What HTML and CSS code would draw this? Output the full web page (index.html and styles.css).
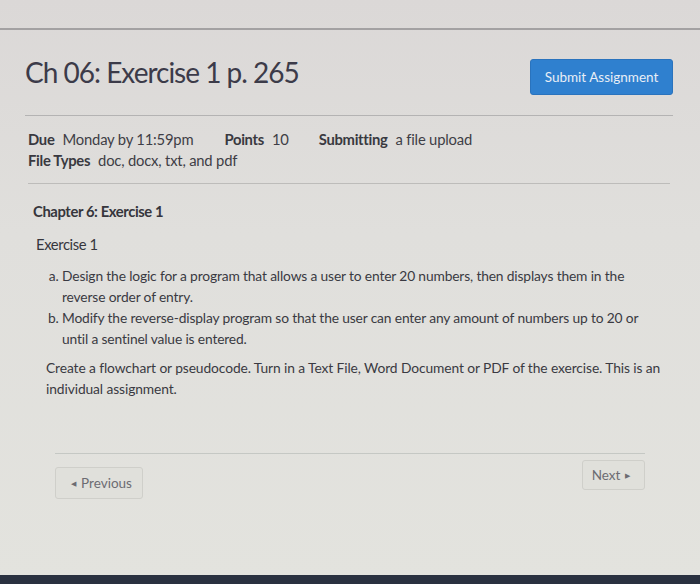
FILE: index.html
```html
<!DOCTYPE html>
<html>
<head>
<meta charset="utf-8">
<link rel="stylesheet" href="styles.css">
</head>
<body>
<div class="topbar"></div>
<main class="page">
  <header class="header">
    <h1 class="title">Ch 06: Exercise 1 p. 265</h1>
    <button class="submit">Submit Assignment</button>
  </header>
  <section class="details">
    <div class="row">
      <span class="lbl">Due</span><span class="val w1">Monday by 11:59pm</span>
      <span class="lbl">Points</span><span class="val w2">10</span>
      <span class="lbl">Submitting</span><span class="val">a file upload</span>
    </div>
    <div class="row">
      <span class="lbl">File Types</span><span class="val">doc, docx, txt, and pdf</span>
    </div>
  </section>
  <section class="content">
    <h2 class="h-chapter">Chapter 6: Exercise 1</h2>
    <h3 class="h-ex">Exercise 1</h3>
    <ol class="tasks">
      <li>Design the logic for a program that allows a user to enter 20 numbers, then displays them in the reverse order of entry.</li>
      <li>Modify the reverse-display program so that the user can enter any amount of numbers up to 20 or until a sentinel value is entered.</li>
    </ol>
    <p class="para">Create a flowchart or pseudocode. Turn in a Text File, Word Document or PDF of the exercise. This is an individual assignment.</p>
  </section>
  <nav class="pager">
    <a class="navbtn prev"><span class="tri">&#9664;</span>Previous</a>
    <a class="navbtn next">Next<span class="tri">&#9654;</span></a>
  </nav>
</main>
<div class="bottombar"></div>
</body>
</html>
```
FILE: styles.css
```css
html, body {
  margin: 0;
  padding: 0;
}
body {
  width: 700px;
  height: 584px;
  overflow: hidden;
  background: linear-gradient(180deg, #dbd8d7 0%, #e0dfdc 40%, #e3e3de 100%);
  font-family: Lato, "Open Sans", sans-serif;
  color: #3a3a42;
  display: flex;
  flex-direction: column;
}
.topbar {
  height: 28px;
  border-bottom: 2px solid #a3a1a2;
  flex: none;
}
.page {
  flex: 1;
  padding: 0 27px 0 25px;
}
.header {
  display: flex;
  justify-content: space-between;
  align-items: center;
  padding: 29px 0 20px;
  border-bottom: 1px solid #b4b3b3;
}
.title {
  margin: 0;
  font-size: 28px;
  font-weight: 400;
  color: #3c3b49;
  letter-spacing: -1px;
  line-height: 36px;
  position: relative;
  top: -5px;
}
.submit {
  width: 143px;
  height: 36px;
  margin-right: 0;
  background: #2f80cf;
  border: 1px solid #2a73bd;
  border-radius: 3px;
  color: #e8eef6;
  font-family: Lato, sans-serif;
  font-size: 13.5px;
  padding: 0;
}
.details {
  margin: 0 3px 0 3px;
  padding: 13px 0 12px;
  border-bottom: 1px solid #bdbcba;
  font-size: 14.8px;
  line-height: 21px;
}
.row {
  display: flex;
}
.lbl {
  font-weight: 700;
  color: #393940;
  margin-right: 8px;
  letter-spacing: -0.3px;
}
.val {
  color: #3e3e46;
  letter-spacing: -0.2px;
}
.w1 { margin-right: 31px; }
.w2 { margin-right: 30px; }
.content {
  padding: 16px 0 0 8px;
}
.h-chapter {
  margin: 0;
  font-size: 14.8px;
  font-weight: 700;
  color: #36363c;
  line-height: 22px;
  letter-spacing: -0.4px;
}
.h-ex {
  margin: 11px 0 0 3px;
  font-size: 14.8px;
  font-weight: 400;
  color: #36363c;
  line-height: 22px;
  letter-spacing: -0.4px;
}
.tasks {
  list-style: lower-alpha;
  margin: 10px 0 0;
  padding: 0 0 0 29px;
  width: 585px;
  font-size: 13.8px;
  line-height: 21px;
  color: #3a3a42;
  letter-spacing: -0.15px;
}
.para {
  margin: 8px 0 0 13px;
  width: 615px;
  font-size: 13.8px;
  line-height: 21px;
  color: #3a3a42;
  letter-spacing: -0.1px;
}
.pager {
  margin: 54px 28px 0 30px;
  border-top: 1px solid #c5c8c4;
  display: flex;
  justify-content: space-between;
  align-items: flex-start;
}
.navbtn {
  display: flex;
  align-items: center;
  justify-content: center;
  background: #e0e0db;
  border: 1px solid #cfcfca;
  border-radius: 3px;
  color: #6c6c72;
  font-size: 13.5px;
}
.prev {
  width: 86px;
  height: 30px;
  margin-top: 13px;
}
.next {
  width: 61px;
  height: 28px;
  margin-top: 6px;
}
.tri {
  font-size: 7px;
  margin: 0 5px;
}
.bottombar {
  height: 9px;
  background: #2a3140;
  flex: none;
}
```
